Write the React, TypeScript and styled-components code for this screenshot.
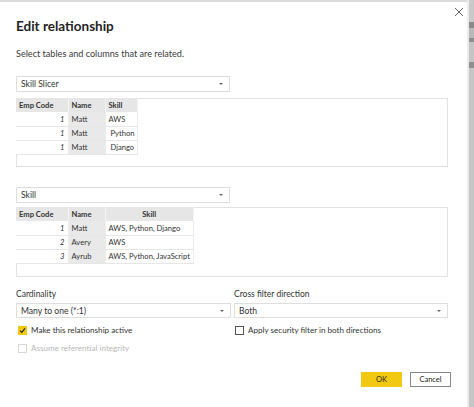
import styled, { createGlobalStyle } from "styled-components"

const Global = createGlobalStyle`
  html, body { margin: 0; padding: 0; background: #fff; }
  body { font-family: Lato, "Open Sans", sans-serif; color: #252423; }
`

const Page = styled.div`
  width: 474px;
  height: 407px;
  display: flex;
  overflow: hidden;
  background: #fff;
`

const Dialog = styled.div`
  flex: 1;
  position: relative;
  border-top: 2px solid #dcdcdc;
  padding: 0 16px;
  display: flex;
  flex-direction: column;
`

const ScrollStrip = styled.div`
  width: 5px;
  border-left: 2px solid #ececec;
  background: linear-gradient(
    #c9c9c9 0 22px, #8a8a8a 22px 28px, #b9b9b9 28px 38px, #8f8f8f 38px 42px,
    #c4c4c4 42px 62px, #8f8f8f 62px 68px, #c6c6c6 68px
  );
`

const Close = styled.button`
  position: absolute;
  top: 4px;
  right: 2px;
  width: 12px;
  height: 12px;
  padding: 0;
  border: none;
  background: none;
  display: flex;
`

const Title = styled.h1`
  margin: 15px 0 0;
  font-size: 13.5px;
  font-weight: 700;
  line-height: 18px;
  color: #252423;
`

const Subtitle = styled.p`
  margin: 13px 0 0;
  font-size: 9.1px;
  line-height: 12px;
  color: #3b3a39;
`

const Select = styled.div<{ $w: number; $mt: number; $h?: number }>`
  margin-top: ${p => p.$mt}px;
  width: ${p => p.$w}px;
  height: ${p => p.$h ?? 16}px;
  box-sizing: border-box;
  border: 1px solid #dedede;
  display: flex;
  align-items: center;
  justify-content: space-between;
  padding: 0 6px 0 4px;
  font-size: 8.6px;
  color: #333;
`

const Caret = styled.span`
  width: 0;
  height: 0;
  border-left: 2px solid transparent;
  border-right: 2px solid transparent;
  border-top: 2px solid #666;
`

const Preview = styled.div<{ $h: number; $mt: number }>`
  margin-top: ${p => p.$mt}px;
  width: 432px;
  height: ${p => p.$h}px;
  box-sizing: border-box;
  border: 1px solid #e2e2e2;
`

const Grid = styled.table`
  margin: -1px 0 0 -1px;
  border-collapse: collapse;
  table-layout: fixed;
  font-size: 7.6px;
  color: #333;
`

const Th = styled.th<{ $w: number; $center?: boolean }>`
  width: ${p => p.$w}px;
  height: 14px;
  box-sizing: border-box;
  padding: 0 3px;
  background: #e6e6e6;
  font-weight: 700;
  text-align: ${p => (p.$center ? "center" : "left")};
  border-right: 1px solid #f4f4f4;
`

const Td = styled.td<{ $num?: boolean; $shade?: boolean }>`
  height: 14px;
  box-sizing: border-box;
  padding: 0 3px;
  border-bottom: 1px solid #e6e6e6;
  border-right: 1px solid #ececec;
  background: ${p => (p.$shade ? "#e9e9e9" : "#fff")};
  text-align: ${p => (p.$num ? "right" : "left")};
  font-style: ${p => (p.$num ? "italic" : "normal")};
  white-space: nowrap;
`

const Columns = styled.div`
  margin-top: 11px;
  display: grid;
  grid-template-columns: 215px 214px;
  column-gap: 3px;
`

const Field = styled.div`
  display: flex;
  flex-direction: column;
`

const Label = styled.div`
  font-size: 8.5px;
  line-height: 12px;
  color: #333;
`

const CheckRow = styled.label<{ $disabled?: boolean; $mt: number }>`
  margin-top: ${p => p.$mt}px;
  display: flex;
  align-items: center;
  gap: 4px;
  font-size: 8.1px;
  line-height: 12px;
  color: ${p => (p.$disabled ? "#b8b8b8" : "#333")};
`

const Box = styled.span<{ $checked?: boolean; $disabled?: boolean }>`
  width: 9px;
  height: 9px;
  box-sizing: border-box;
  margin-left: ${p => (p.$disabled || p.$checked ? 2 : 1)}px;
  border: 1px solid ${p => (p.$checked ? "#f2c811" : p.$disabled ? "#d8d8d8" : "#555")};
  background: ${p => (p.$checked ? "#f2c811" : "#fff")};
  display: flex;
  align-items: center;
  justify-content: center;
`

const Footer = styled.div`
  margin-top: 18px;
  display: flex;
  justify-content: flex-end;
  gap: 8px;
  width: 435px;
`

const Button = styled.button<{ $primary?: boolean }>`
  width: 41px;
  height: 15px;
  padding: 0;
  font-family: inherit;
  font-size: 7.5px;
  color: #252423;
  background: ${p => (p.$primary ? "#f2c811" : "#fff")};
  border: 1px solid ${p => (p.$primary ? "#f2c811" : "#8a8886")};
`

type Row = [string, string, string]

const DataTable = ({ rows, skillW, h, mt, center }: { rows: Row[]; skillW: number; h: number; mt: number; center?: boolean }) => (
  <Preview $h={h} $mt={mt}>
    <Grid>
      <thead>
        <tr>
          <Th $w={52}>Emp Code</Th>
          <Th $w={37}>Name</Th>
          <Th $w={skillW} $center={center}>Skill</Th>
        </tr>
      </thead>
      <tbody>
        {rows.map((r, i) => (
          <tr key={i}>
            <Td $num>{r[0]}</Td>
            <Td $shade>{r[1]}</Td>
            <Td>{r[2]}</Td>
          </tr>
        ))}
      </tbody>
    </Grid>
  </Preview>
)

export default function App() {
  return (
    <Page>
      <Global />
      <Dialog>
        <Close aria-label="Close">
          <svg width="12" height="12" viewBox="0 0 12 12">
            <path d="M2 2 L10 10 M10 2 L2 10" stroke="#666" strokeWidth="1" />
          </svg>
        </Close>
        <Title>Edit relationship</Title>
        <Subtitle>Select tables and columns that are related.</Subtitle>

        <Select $w={214} $mt={16}>
          Skill Slicer <Caret />
        </Select>
        <DataTable
          mt={6}
          h={69}
          skillW={32}
          rows={[
            ["1", "Matt", "AWS"],
            ["1", "Matt", "\u00a0Python"],
            ["1", "Matt", "\u00a0Django"],
          ]}
        />

        <Select $w={214} $mt={20}>
          Skill <Caret />
        </Select>
        <DataTable
          mt={4}
          h={70}
          skillW={83}
          center
          rows={[
            ["1", "Matt", "AWS, Python, Django"],
            ["2", "Avery", "AWS"],
            ["3", "Ayrub", "AWS, Python, JavaScript"],
          ]}
        />

        <Columns>
          <Field>
            <Label>Cardinality</Label>
            <Select $w={215} $mt={3} $h={15}>
              Many to one (*:1) <Caret />
            </Select>
          </Field>
          <Field>
            <Label>Cross filter direction</Label>
            <Select $w={214} $mt={3} $h={15}>
              Both <Caret />
            </Select>
          </Field>
          <CheckRow $mt={6}>
            <Box $checked>
              <svg width="7" height="7" viewBox="0 0 7 7">
                <path d="M1 3.6 L2.8 5.4 L6 1.4" stroke="#252423" strokeWidth="1.2" fill="none" />
              </svg>
            </Box>
            Make this relationship active
          </CheckRow>
          <CheckRow $mt={6}>
            <Box />
            Apply security filter in both directions
          </CheckRow>
          <CheckRow $mt={6} $disabled>
            <Box $disabled />
            Assume referential integrity
          </CheckRow>
        </Columns>

        <Footer>
          <Button $primary>OK</Button>
          <Button>Cancel</Button>
        </Footer>
      </Dialog>
      <ScrollStrip />
    </Page>
  )
}
